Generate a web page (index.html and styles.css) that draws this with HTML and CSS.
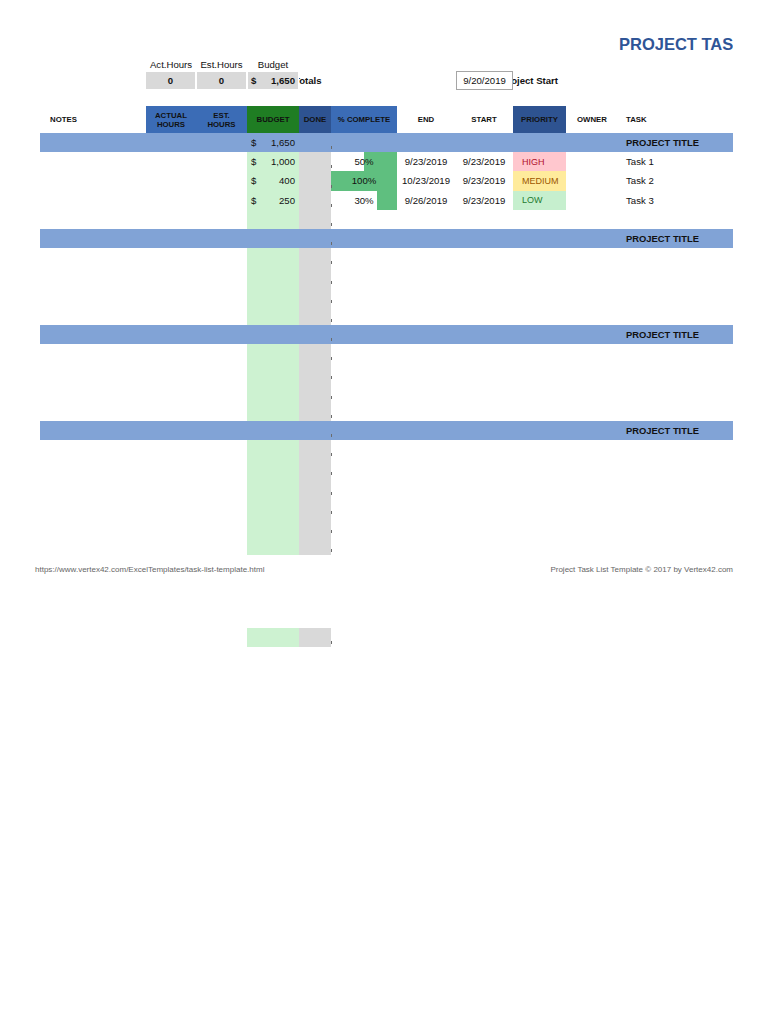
FILE: index.html
```html
<!DOCTYPE html>
<html>
<head>
<meta charset="utf-8">
<link rel="stylesheet" href="styles.css">
</head>
<body>
<div class="page">
  <div class="row title-line">
    <div class="doc-title c11"><span>PROJECT TASK LIST</span></div>
  </div>
  <div class="row labels">
    <div class="lbl c2">Act.Hours</div>
    <div class="lbl c3">Est.Hours</div>
    <div class="lbl c4">Budget</div>
  </div>
  <div class="row totals">
    <div class="tot c2">0</div>
    <div class="tot c3">0</div>
    <div class="tot tot-money c4"><span>$</span><span>1,650</span></div>
    <div class="clip c5"><span class="clip-in totals-txt">Totals</span></div>
    <div class="datebox c8">9/20/2019</div>
    <div class="clip c9 wide"><span class="clip-in start-txt">Project Start</span></div>
  </div>

  <div class="row head">
    <div class="h c1 left">NOTES</div>
    <div class="h c2 blue">ACTUAL<br>HOURS</div>
    <div class="h c3 blue">EST.<br>HOURS</div>
    <div class="h c4 green">BUDGET</div>
    <div class="h c5 dark">DONE</div>
    <div class="h c6 blue">% COMPLETE</div>
    <div class="h c7">END</div>
    <div class="h c8">START</div>
    <div class="h c9 dark">PRIORITY</div>
    <div class="h c10">OWNER</div>
    <div class="h c11 left task-h">TASK</div>
  </div>

  <!-- Section 1 -->
  <div class="row band">
    <div class="money c4"><span>$</span><span>1,650</span></div>
    <div class="done c5"></div>
    <div class="ptitle c11">PROJECT TITLE</div>
  </div>
  <div class="row">
    <div class="money c4 bud"><span>$</span><span>1,000</span></div>
    <div class="done c5 gray"></div>
    <div class="pct c6"><span class="bar" style="width:50%"></span><span class="pct-txt">50%</span></div>
    <div class="date c7">9/23/2019</div>
    <div class="date c8">9/23/2019</div>
    <div class="prio high c9">HIGH</div>
    <div class="task c11">Task 1</div>
  </div>
  <div class="row">
    <div class="money c4 bud"><span>$</span><span>400</span></div>
    <div class="done c5 gray"></div>
    <div class="pct c6"><span class="bar" style="width:100%"></span><span class="pct-txt">100%</span></div>
    <div class="date c7">10/23/2019</div>
    <div class="date c8">9/23/2019</div>
    <div class="prio med c9">MEDIUM</div>
    <div class="task c11">Task 2</div>
  </div>
  <div class="row">
    <div class="money c4 bud"><span>$</span><span>250</span></div>
    <div class="done c5 gray"></div>
    <div class="pct c6"><span class="bar" style="width:30%"></span><span class="pct-txt">30%</span></div>
    <div class="date c7">9/26/2019</div>
    <div class="date c8">9/23/2019</div>
    <div class="prio low c9">LOW</div>
    <div class="task c11">Task 3</div>
  </div>
  <div class="row"><div class="c4 bud"></div><div class="done c5 gray"></div></div>

  <!-- Section 2 -->
  <div class="row band"><div class="done c5"></div><div class="ptitle c11">PROJECT TITLE</div></div>
  <div class="row"><div class="c4 bud"></div><div class="done c5 gray"></div></div>
  <div class="row"><div class="c4 bud"></div><div class="done c5 gray"></div></div>
  <div class="row"><div class="c4 bud"></div><div class="done c5 gray"></div></div>
  <div class="row"><div class="c4 bud"></div><div class="done c5 gray"></div></div>

  <!-- Section 3 -->
  <div class="row band"><div class="done c5"></div><div class="ptitle c11">PROJECT TITLE</div></div>
  <div class="row"><div class="c4 bud"></div><div class="done c5 gray"></div></div>
  <div class="row"><div class="c4 bud"></div><div class="done c5 gray"></div></div>
  <div class="row"><div class="c4 bud"></div><div class="done c5 gray"></div></div>
  <div class="row"><div class="c4 bud"></div><div class="done c5 gray"></div></div>

  <!-- Section 4 -->
  <div class="row band"><div class="done c5"></div><div class="ptitle c11">PROJECT TITLE</div></div>
  <div class="row"><div class="c4 bud"></div><div class="done c5 gray"></div></div>
  <div class="row"><div class="c4 bud"></div><div class="done c5 gray"></div></div>
  <div class="row"><div class="c4 bud"></div><div class="done c5 gray"></div></div>
  <div class="row"><div class="c4 bud"></div><div class="done c5 gray"></div></div>
  <div class="row"><div class="c4 bud"></div><div class="done c5 gray"></div></div>
  <div class="row"><div class="c4 bud"></div><div class="done c5 gray"></div></div>

  <div class="footer">
    <span>https://www.vertex42.com/ExcelTemplates/task-list-template.html</span>
    <span>Project Task List Template © 2017 by Vertex42.com</span>
  </div>

  <div class="row stray"><div class="c4 bud"></div><div class="done c5 gray"></div></div>
</div>
</body>
</html>
```

FILE: styles.css
```css
html, body {
  margin: 0;
  padding: 0;
  background: #ffffff;
}

body {
  font-family: "Liberation Sans", Arial, sans-serif;
  color: #111111;
  font-size: 9.6px;
}

.page {
  width: 693px;
  margin-left: 40px;
  padding-top: 34px;
}

.row {
  display: grid;
  grid-template-columns: 106px 50px 51px 52px 32px 66px 58px 58px 53px 52px 115px;
  height: 19.2px;
  align-items: stretch;
}

.c1 { grid-column: 1; }
.c2 { grid-column: 2; }
.c3 { grid-column: 3; }
.c4 { grid-column: 4; }
.c5 { grid-column: 5; }
.c6 { grid-column: 6; }
.c7 { grid-column: 7; }
.c8 { grid-column: 8; }
.c9 { grid-column: 9; }
.c10 { grid-column: 10; }
.c11 { grid-column: 11; }
.c9.wide { grid-column: 9 / span 2; }

/* top area */
.title-line {
  height: 20px;
}
.doc-title {
  overflow: hidden;
  white-space: nowrap;
  font-size: 16.5px;
  font-weight: bold;
  line-height: 20px;
  color: #2f5597;
  padding-left: 1px;
}

.labels {
  margin-top: 5px;
  height: 12px;
}
.lbl {
  text-align: center;
  line-height: 12px;
  color: #111;
}

.totals {
  height: 19px;
}
.tot {
  background: #d9d9d9;
  margin: 1px 1px 1px 0;
  font-weight: bold;
  text-align: center;
  line-height: 17px;
}
.c3.tot, .c4.tot { margin-left: 1px; }
.tot-money {
  display: flex;
  justify-content: space-between;
  padding: 0 3px 0 3px;
}
.clip {
  overflow: hidden;
  white-space: nowrap;
  font-weight: bold;
  line-height: 19px;
}
.clip-in { display: inline-block; }
.totals-txt { margin-left: -5px; }
.start-txt { margin-left: -12px; }
.datebox {
  margin-left: 1px;
  border: 1px solid #a6a6a6;
  text-align: center;
  line-height: 17px;
}

/* header */
.head {
  margin-top: 16px;
  height: 27px;
}
.h {
  display: flex;
  align-items: center;
  justify-content: center;
  text-align: center;
  font-weight: bold;
  font-size: 7.8px;
  line-height: 9px;
  color: #111;
}
.h.left {
  justify-content: flex-start;
  padding-left: 10px;
}
.h.task-h { padding-left: 8px; }
.h.blue { background: #3b6cb6; }
.h.green { background: #1f7d23; }
.h.dark { background: #2e5391; }

/* body rows */
.band { background: #81a3d6; }
.bud { background: #cdf2d1; }
.gray { background: #d9d9d9; }

.money {
  display: flex;
  justify-content: space-between;
  align-items: center;
  padding: 0 4px;
}

.done { position: relative; }
.done::after {
  content: "";
  position: absolute;
  right: -1px;
  bottom: 3px;
  width: 1px;
  height: 3px;
  background: #6b6b6b;
}

.ptitle {
  font-weight: bold;
  font-size: 9.4px;
  padding-left: 8px;
  display: flex;
  align-items: center;
}

.pct {
  display: grid;
}
.bar {
  grid-area: 1 / 1;
  justify-self: end;
  background: #5fbf7f;
}
.pct-txt {
  grid-area: 1 / 1;
  align-self: center;
  justify-self: center;
}

.date {
  display: flex;
  align-items: center;
  justify-content: center;
}

.prio {
  display: flex;
  align-items: center;
  padding-left: 9px;
  font-size: 9px;
}
.high { background: #ffc7ce; color: #b0102a; }
.med { background: #ffeb9c; color: #9c5700; }
.low { background: #c6efce; color: #1e7b2e; }

.task {
  display: flex;
  align-items: center;
  padding-left: 8px;
}

.footer {
  display: flex;
  justify-content: space-between;
  margin-left: -5px;
  margin-top: 10px;
  font-size: 8px;
  line-height: 10px;
  color: #666666;
}

.stray {
  margin-top: 53px;
}
```
